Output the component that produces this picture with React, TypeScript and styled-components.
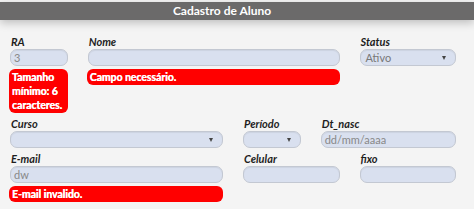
import React from "react";
import styled, { createGlobalStyle } from "styled-components";

const Global = createGlobalStyle`
  html, body { margin: 0; padding: 0; background: #f4f4f4; }
  body { font-family: Lato, "Open Sans", sans-serif; width: 474px; height: 209px; overflow: hidden; }
  * { box-sizing: border-box; }
`;

const Page = styled.div`
  width: 474px;
  height: 209px;
  background: #f4f4f4;
  padding-top: 2px;
`;

const Header = styled.div`
  height: 18px;
  background: #6b6a6a;
  color: #fff;
  font-weight: 700;
  font-size: 12px;
  line-height: 18px;
  text-align: center;
  padding-right: 30px;
  box-shadow: 0 3px 8px rgba(0, 0, 0, 0.22);
`;

const Form = styled.div`
  width: 466px;
  padding: 16px 10px 0;
  display: flex;
  flex-direction: column;
  gap: 5px;
`;

const Row = styled.div`
  display: grid;
  grid-template-columns: repeat(12, 1fr);
  column-gap: 20px;
  align-items: start;
`;

const Field = styled.div<{ $span: number }>`
  grid-column: span ${(p) => p.$span};
  display: flex;
  flex-direction: column;
  min-width: 0;
`;

const Label = styled.label`
  font-size: 11px;
  font-weight: 700;
  font-style: italic;
  color: #1e1e1e;
  height: 13px;
  line-height: 12px;
  padding-left: 1px;
`;

const Input = styled.div`
  height: 17px;
  border-radius: 7px;
  background: #d9e0ef;
  border: 1px solid #c3c8d2;
  box-shadow: inset 0 1px 1px rgba(0, 0, 0, 0.06);
  font-size: 11px;
  line-height: 15px;
  color: #888;
  padding: 0 3px;
  position: relative;
  white-space: nowrap;
`;

const Select = styled(Input)`
  padding-left: 5px;
  color: #777;
  &::after {
    content: "";
    position: absolute;
    right: 9px;
    top: 6px;
    border-left: 2.5px solid transparent;
    border-right: 2.5px solid transparent;
    border-top: 4px solid #444;
  }
`;

const Error = styled.div`
  margin-top: 3px;
  background: #ff0000;
  color: #fff;
  font-weight: 700;
  font-size: 10.4px;
  line-height: 14px;
  border-radius: 6px;
  padding: 1px 4px 1px 3px;
  margin-left: -1px;
  text-shadow: 0.35px 0 0 #fff;
`;

export default function App() {
  return (
    <>
      <Global />
      <Page>
        <Header>Cadastro de Aluno</Header>
        <Form>
          <Row>
            <Field $span={2}>
              <Label>RA</Label>
              <Input>3</Input>
              <Error>Tamanho mínimo: 6 caracteres.</Error>
            </Field>
            <Field $span={7}>
              <Label>Nome</Label>
              <Input />
              <Error>Campo necessário.</Error>
            </Field>
            <Field $span={3}>
              <Label>Status</Label>
              <Select>Ativo</Select>
            </Field>
          </Row>
          <Row>
            <Field $span={6}>
              <Label>Curso</Label>
              <Select />
            </Field>
            <Field $span={2}>
              <Label>Período</Label>
              <Select />
            </Field>
            <Field $span={4}>
              <Label>Dt_nasc</Label>
              <Input>dd/mm/aaaa</Input>
            </Field>
          </Row>
          <Row>
            <Field $span={6}>
              <Label>E-mail</Label>
              <Input>dw</Input>
              <Error>E-mail invalido.</Error>
            </Field>
            <Field $span={3}>
              <Label>Celular</Label>
              <Input />
            </Field>
            <Field $span={3}>
              <Label>fixo</Label>
              <Input />
            </Field>
          </Row>
        </Form>
      </Page>
    </>
  );
}
